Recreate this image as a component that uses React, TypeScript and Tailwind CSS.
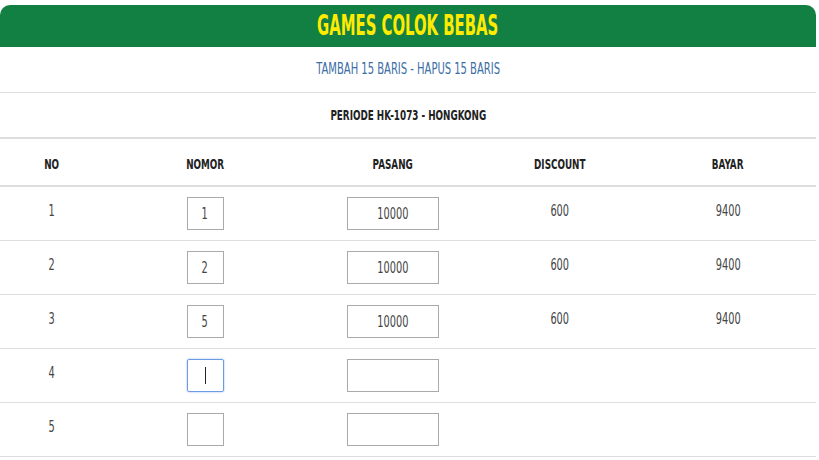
import React from 'react';

const rows = [
  { no: 1, nomor: '1', pasang: '10000', discount: '600', bayar: '9400' },
  { no: 2, nomor: '2', pasang: '10000', discount: '600', bayar: '9400' },
  { no: 3, nomor: '5', pasang: '10000', discount: '600', bayar: '9400' },
  { no: 4, nomor: '', pasang: '', discount: '', bayar: '', focus: true },
  { no: 5, nomor: '', pasang: '', discount: '', bayar: '' },
];

const font = { fontFamily: '"DejaVu Sans Condensed", "Liberation Sans", sans-serif' };
const cols = 'grid grid-cols-[104px_202px_174px_160px_1fr]';

// the page uses a very narrow display face, squeeze the condensed one to match
function Narrow({ children, className = '' }: { children: React.ReactNode; className?: string }) {
  return <span className={`inline-block whitespace-nowrap scale-x-[0.7] ${className}`}>{children}</span>;
}

export default function App() {
  return (
    <div className="w-[816px] bg-white text-[#333]" style={font}>
      <div className="mt-[5px] h-[42px] rounded-t-[10px] bg-[#138043] flex items-center justify-center">
        <Narrow className="text-[28px] font-bold text-[#ffeb00] leading-none scale-x-[0.59]">GAMES COLOK BEBAS</Narrow>
      </div>

      <div className="h-[46px] flex items-center justify-center border-b border-[#ddd]">
        <Narrow className="text-[15px] text-[#3a6ea5] scale-x-[0.74] cursor-pointer">TAMBAH 15 BARIS - HAPUS 15 BARIS</Narrow>
      </div>

      <div className="h-[46px] flex items-center justify-center border-b-2 border-[#ddd]">
        <Narrow className="text-[14px] font-bold text-[#222]">PERIODE HK-1073 - HONGKONG</Narrow>
      </div>

      <div className={`${cols} h-[48px] pt-[4px] items-center text-center text-[14px] font-bold text-[#222] border-b-2 border-[#ddd]`}>
        <div><Narrow>NO</Narrow></div>
        <div><Narrow>NOMOR</Narrow></div>
        <div><Narrow>PASANG</Narrow></div>
        <div><Narrow>DISCOUNT</Narrow></div>
        <div><Narrow>BAYAR</Narrow></div>
      </div>

      {rows.map((r) => (
        <div key={r.no} className={`${cols} h-[54px] text-center text-[16px] text-[#444] border-b border-[#ddd]`}>
          <div className="pt-[12px]"><Narrow className="scale-x-[0.68]">{r.no}</Narrow></div>
          <div className="pt-[10px] flex justify-center">
            <div
              className={`w-[37px] h-[33px] flex items-center justify-center border ${r.focus ? 'border-[#6b9be0] rounded-[2px] shadow-[0_0_2px_#8ab4f0]' : 'border-[#aaa]'}`}
            >
              {r.focus ? <span className="w-px h-[17px] bg-[#222]" /> : <Narrow className="scale-x-[0.68]">{r.nomor}</Narrow>}
            </div>
          </div>
          <div className="pt-[10px] flex justify-center">
            <div className="w-[92px] h-[33px] flex items-center justify-center border border-[#aaa]">
              <Narrow className="scale-x-[0.68]">{r.pasang}</Narrow>
            </div>
          </div>
          <div className="pt-[12px]"><Narrow className="scale-x-[0.68]">{r.discount}</Narrow></div>
          <div className="pt-[12px]"><Narrow className="scale-x-[0.68]">{r.bayar}</Narrow></div>
        </div>
      ))}
    </div>
  );
}
